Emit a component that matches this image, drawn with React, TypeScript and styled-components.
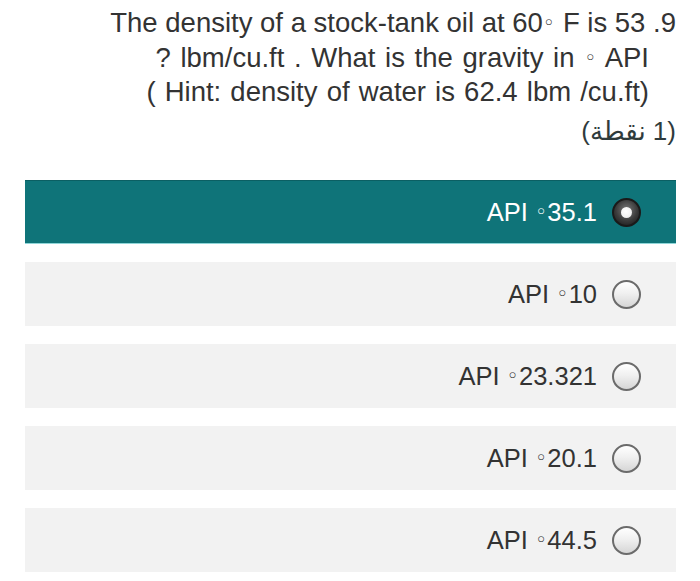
import React from "react";
import styled, { createGlobalStyle } from "styled-components";

const Global = createGlobalStyle`
  html, body { margin: 0; padding: 0; background: #ffffff; }
  body { font-family: "Liberation Sans", Arial, sans-serif; }
`;

const Page = styled.div`
  width: 700px;
  height: 581px;
  padding: 6px 24px 0 25px;
  box-sizing: border-box;
  display: flex;
  flex-direction: column;
  background: #ffffff;
`;

const Question = styled.div`
  display: flex;
  flex-direction: column;
  align-items: flex-end;
  color: #333333;
  font-size: 27.5px;
  line-height: 34.5px;
  margin-bottom: 32px;
`;

const Line = styled.div<{ $inset?: number; $spacing?: number }>`
  white-space: pre;
  height: 34.5px;
  padding-right: ${(p) => p.$inset ?? 0}px;
  word-spacing: ${(p) => p.$spacing ?? 0}px;
`;

const Points = styled.div`
  direction: rtl;
  white-space: pre;
  height: 34.5px;
  padding-top: 4px;
  font-size: 26px;
  color: #2f3b3c;
  font-family: "Liberation Sans", "Noto Sans", "DejaVu Sans", sans-serif;
`;

const Options = styled.div`
  display: flex;
  flex-direction: column;
  gap: 18px;
`;

const Option = styled.div<{ $selected?: boolean }>`
  height: 64px;
  box-sizing: border-box;
  display: flex;
  align-items: center;
  justify-content: flex-end;
  gap: 15px;
  padding-right: 35px;
  background: ${(p) => (p.$selected ? "#0f7479" : "#f2f2f2")};
  color: ${(p) => (p.$selected ? "#ffffff" : "#333333")};
  border-top: 1px solid ${(p) => (p.$selected ? "#0b5f63" : "#f2f2f2")};
  border-bottom: 1px solid ${(p) => (p.$selected ? "#8fd6d8" : "#f2f2f2")};
  font-size: 25.5px;
`;

const Label = styled.span`
  white-space: pre;
`;

const Degree = styled.span`
  font-family: "DejaVu Sans", sans-serif;
  font-size: 21px;
  line-height: 1;
  position: relative;
  top: -2px;
`;

const Radio = styled.span<{ $checked?: boolean }>`
  width: 29px;
  height: 29px;
  border-radius: 50%;
  box-sizing: border-box;
  display: flex;
  align-items: center;
  justify-content: center;
  flex-shrink: 0;
  ${(p) =>
    p.$checked
      ? `
    background: radial-gradient(circle at 50% 40%, #7a7a7a 0%, #3a3a3a 55%, #151515 100%);
    border: 2px solid #1a1a1a;
  `
      : `
    background: linear-gradient(180deg, #ffffff 0%, #f0f0f0 45%, #d6d6d6 100%);
    border: 2px solid #6b6b6b;
  `}
`;

const Dot = styled.span`
  width: 11px;
  height: 11px;
  border-radius: 50%;
  background: radial-gradient(circle at 45% 40%, #ffffff 0%, #f2f2f2 60%, #cfcfcf 100%);
`;

const options = [
  { value: "35.1", selected: true },
  { value: "10", selected: false },
  { value: "23.321", selected: false },
  { value: "20.1", selected: false },
  { value: "44.5", selected: false },
];

export default function App() {
  return (
    <>
      <Global />
      <Page>
        <Question>
          <Line>
            The density of a stock-tank oil at 60<Degree>◦</Degree> F is 53 .9
          </Line>
          <Line $inset={27} $spacing={2}>
            ? lbm/cu.ft . What is the gravity in <Degree>◦</Degree> API
          </Line>
          <Line $inset={27} $spacing={1.5}>
            ( Hint: density of water is 62.4 lbm /cu.ft)
          </Line>
          <Points>(1 نقطة)</Points>
        </Question>
        <Options>
          {options.map((o) => (
            <Option key={o.value} $selected={o.selected}>
              <Label>
                API <Degree>◦</Degree>
                {o.value}
              </Label>
              <Radio $checked={o.selected}>{o.selected && <Dot />}</Radio>
            </Option>
          ))}
        </Options>
      </Page>
    </>
  );
}
